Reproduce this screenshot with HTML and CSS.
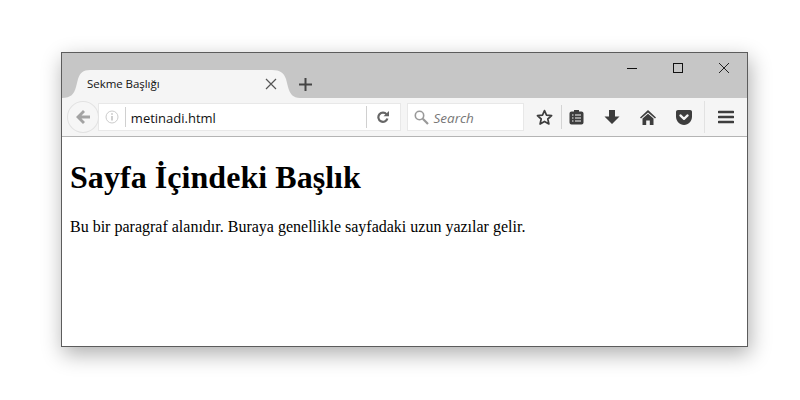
FILE: index.html
```html
<!DOCTYPE html>
<html lang="en">
    <head>
        <meta charset="UTF-8">
        <meta name="viewport" content="width=device-width, initial-scale=1.0">
        <title>Sekme Başlığı</title>
        <link rel="stylesheet" href="styles.css">
    </head>
    <body>
        <div class="window">
            <div class="titlebar">
                <div class="tab">
                    <svg class="tab-shape" width="238" height="28" viewBox="0 0 238 28">
                        <path d="M0 28C9 28 12 24 14 17L16 9C18 3 21 0 28 0H210C218 0 222 3 224 9L226 17C228 24 231 28 238 28Z" fill="#f5f5f5"/>
                    </svg>
                    <span class="tab-title">Sekme Başlığı</span>
                    <svg class="tab-close" width="12" height="12" viewBox="0 0 12 12">
                        <path d="M1 1L11 11M11 1L1 11" stroke="#555" stroke-width="1.2" fill="none"/>
                    </svg>
                </div>
                <svg class="new-tab" width="13" height="13" viewBox="0 0 13 13">
                    <path d="M6.5 0V13M0 6.5H13" stroke="#444" stroke-width="2" fill="none"/>
                </svg>
                <div class="window-controls">
                    <svg class="control" width="46" height="12" viewBox="0 0 46 12">
                        <path d="M18 6.5H28" stroke="#111" stroke-width="1" fill="none"/>
                    </svg>
                    <svg class="control" width="46" height="12" viewBox="0 0 46 12">
                        <rect x="18.5" y="1.5" width="9" height="9" stroke="#111" stroke-width="1" fill="none"/>
                    </svg>
                    <svg class="control" width="46" height="12" viewBox="0 0 46 12">
                        <path d="M18 1L28 11M28 1L18 11" stroke="#222" stroke-width="1" fill="none"/>
                    </svg>
                </div>
            </div>
            <div class="toolbar">
                <div class="back-btn">
                    <svg width="16" height="16" viewBox="0 0 16 16">
                        <path d="M8 1L1 8L8 15L10 13L6.5 9.6H15V6.4H6.5L10 3Z" fill="#a3a3a3"/>
                    </svg>
                </div>
                <div class="url-bar">
                    <svg class="info-icon" width="14" height="14" viewBox="0 0 14 14">
                        <circle cx="7" cy="7" r="6" stroke="#ccc" stroke-width="1" fill="none"/>
                        <path d="M7 6V10.5M7 3.2V4.8" stroke="#bbb" stroke-width="1.4" fill="none"/>
                    </svg>
                    <span class="url-text">metinadi.html</span>
                    <div class="reload">
                        <svg width="12" height="12" viewBox="0 0 12 12">
                            <path d="M9.6 3.4A4.6 4.6 0 1 0 10.4 7.5" stroke="#666" stroke-width="2.2" fill="none"/>
                            <path d="M6.5 5.2H12V0Z" fill="#666"/>
                        </svg>
                    </div>
                </div>
                <div class="search-bar">
                    <svg width="15" height="15" viewBox="0 0 15 15">
                        <circle cx="5.5" cy="5.5" r="4.2" stroke="#999" stroke-width="1.6" fill="none"/>
                        <path d="M8.8 8.8L14 14" stroke="#999" stroke-width="2.2" fill="none"/>
                    </svg>
                    <span class="search-text">Search</span>
                </div>
                <div class="icons">
                    <div class="icon-btn star-btn">
                        <svg width="17" height="17" viewBox="0 0 17 17">
                            <path d="M8.5 1.6L10.5 6.2L15.6 6.7L11.8 10L12.9 15L8.5 12.4L4.1 15L5.2 10L1.4 6.7L6.5 6.2Z" stroke="#3d3d3d" stroke-width="1.7" stroke-linejoin="round" fill="none"/>
                        </svg>
                    </div>
                    <div class="icon-btn clip-btn">
                        <svg width="15" height="16" viewBox="0 0 15 16">
                            <path d="M2.5 2.5H5V1H10V2.5H12.5C13.6 2.5 14.5 3.2 14.5 4.5V13.5C14.5 14.6 13.6 15.5 12.5 15.5H2.5C1.4 15.5 .5 14.6 .5 13.5V4.5C.5 3.2 1.4 2.5 2.5 2.5Z" fill="#3d3d3d"/>
                            <path d="M3 6H4.5M6 6H12M3 9H4.5M6 9H12M3 12H4.5M6 12H12" stroke="#f5f5f5" stroke-width="1.2" fill="none"/>
                        </svg>
                    </div>
                    <div class="icon-btn">
                        <svg width="16" height="16" viewBox="0 0 16 16">
                            <path d="M5 1H11V7.5H15.5L8 15L.5 7.5H5Z" fill="#3d3d3d"/>
                        </svg>
                    </div>
                    <div class="icon-btn">
                        <svg width="16" height="15" viewBox="0 0 16 15">
                            <path d="M8 0L16 7.4L15 8.6L8 2.4L1 8.6L0 7.4Z" fill="#3d3d3d"/>
                            <path d="M8 3.8L13.5 8.6V15H9.8V10.5H6.2V15H2.5V8.6Z" fill="#3d3d3d"/>
                        </svg>
                    </div>
                    <div class="icon-btn">
                        <svg width="16" height="15" viewBox="0 0 16 15">
                            <path d="M2 0H14C15.2 0 16 .8 16 2V6.5C16 11.2 12.4 15 8 15C3.6 15 0 11.2 0 6.5V2C0 .8 .8 0 2 0Z" fill="#3d3d3d"/>
                            <path d="M4.4 5.4L8 8.9L11.6 5.4" stroke="#f5f5f5" stroke-width="2.2" stroke-linecap="round" stroke-linejoin="round" fill="none"/>
                        </svg>
                    </div>
                    <div class="icon-btn menu-btn">
                        <svg width="16" height="14" viewBox="0 0 16 14">
                            <path d="M1 2H15M1 7H15M1 12H15" stroke="#3d3d3d" stroke-width="2.6" stroke-linecap="round" fill="none"/>
                        </svg>
                    </div>
                </div>
            </div>
            <div class="page">
                <h1>Sayfa İçindeki Başlık</h1>
                <p>Bu bir paragraf alanıdır. Buraya genellikle sayfadaki uzun yazılar gelir.</p>
            </div>
        </div>
    </body>
</html>
```

FILE: styles.css
```css
html {
    background-color: #fff;
}
body {
    box-sizing: border-box;
    min-height: 400px;
    margin: 0;
    padding: 52px 0 0 61px;
}
.window {
    display: flex;
    flex-direction: column;
    box-sizing: border-box;
    width: 687px;
    height: 295px;
    border: 1px solid #5c5c5c;
    background-color: #fff;
    box-shadow: 2px 7px 20px rgba(0, 0, 0, 0.32);
}
.titlebar {
    display: flex;
    align-items: flex-end;
    flex: none;
    height: 45px;
    background-color: #c6c6c6;
}
.tab {
    position: relative;
    display: flex;
    align-items: center;
    box-sizing: border-box;
    width: 238px;
    height: 28px;
    padding: 0 14px 0 25px;
}
.tab-shape {
    position: absolute;
    top: 0;
    left: 0;
}
.tab-title {
    position: relative;
    flex: 1;
    padding-bottom: 1px;
    font-family: "Open Sans", sans-serif;
    font-size: 11.5px;
    letter-spacing: -0.05px;
    color: #111;
}
.tab-close {
    position: relative;
    margin-right: 9px;
}
.new-tab {
    margin: 0 0 7px -1px;
}
.window-controls {
    display: flex;
    align-self: flex-start;
    margin: 9px 0 0 auto;
}
.control {
    display: block;
}
.toolbar {
    display: flex;
    align-items: center;
    flex: none;
    box-sizing: border-box;
    height: 39px;
    padding-left: 5px;
    background-color: #f5f5f5;
    border-bottom: 1px solid #b4b4b4;
}
.back-btn {
    position: relative;
    z-index: 1;
    display: flex;
    align-items: center;
    justify-content: center;
    box-sizing: border-box;
    width: 32px;
    height: 32px;
    border: 1px solid #e2e2e2;
    border-radius: 50%;
    background-color: #f6f6f6;
}
.url-bar {
    display: flex;
    align-items: center;
    box-sizing: border-box;
    width: 304px;
    height: 28px;
    margin-left: -1px;
    padding-left: 6px;
    background-color: #fff;
    border: 1px solid #e8e8e8;
}
.info-icon {
    flex: none;
    padding: 3px 6px 3px 0;
    border-right: 1px solid #d0d0d0;
    box-sizing: content-box;
    height: 14px;
}
.url-text {
    flex: 1;
    margin-left: 5px;
    padding-top: 1px;
    font-family: "Open Sans", sans-serif;
    font-size: 13px;
    color: #111;
}
.reload {
    display: flex;
    align-items: center;
    justify-content: center;
    width: 33px;
    height: 22px;
    border-left: 1px solid #d0d0d0;
}
.search-bar {
    display: flex;
    align-items: center;
    gap: 5px;
    box-sizing: border-box;
    width: 118px;
    height: 28px;
    margin-left: 6px;
    padding-left: 6px;
    background-color: #fff;
    border: 1px solid #e8e8e8;
}
.search-text {
    padding-top: 1px;
    font-family: "Open Sans", sans-serif;
    font-size: 13.5px;
    font-style: italic;
    color: #777;
}
.icons {
    display: flex;
    align-items: center;
    margin-left: 4px;
}
.icon-btn {
    display: flex;
    align-items: center;
    justify-content: center;
    box-sizing: border-box;
    width: 36px;
    height: 24px;
}
.star-btn {
    width: 34px;
    border-right: 1px solid #d4d4d4;
}
.clip-btn {
    width: 28px;
    margin-right: 4px;
}
.menu-btn {
    width: 43px;
    height: 32px;
    margin-left: 2px;
    border-left: 1px solid #e2e2e2;
}
.page {
    flex: 1;
    padding: 8px;
    font-family: "Liberation Serif", serif;
    color: #000;
}
h1 {
    margin: 14px 0 22px;
    font-size: 32px;
    font-weight: bold;
    letter-spacing: 0.05px;
}
p {
    margin: 0;
    font-size: 16px;
}
```
